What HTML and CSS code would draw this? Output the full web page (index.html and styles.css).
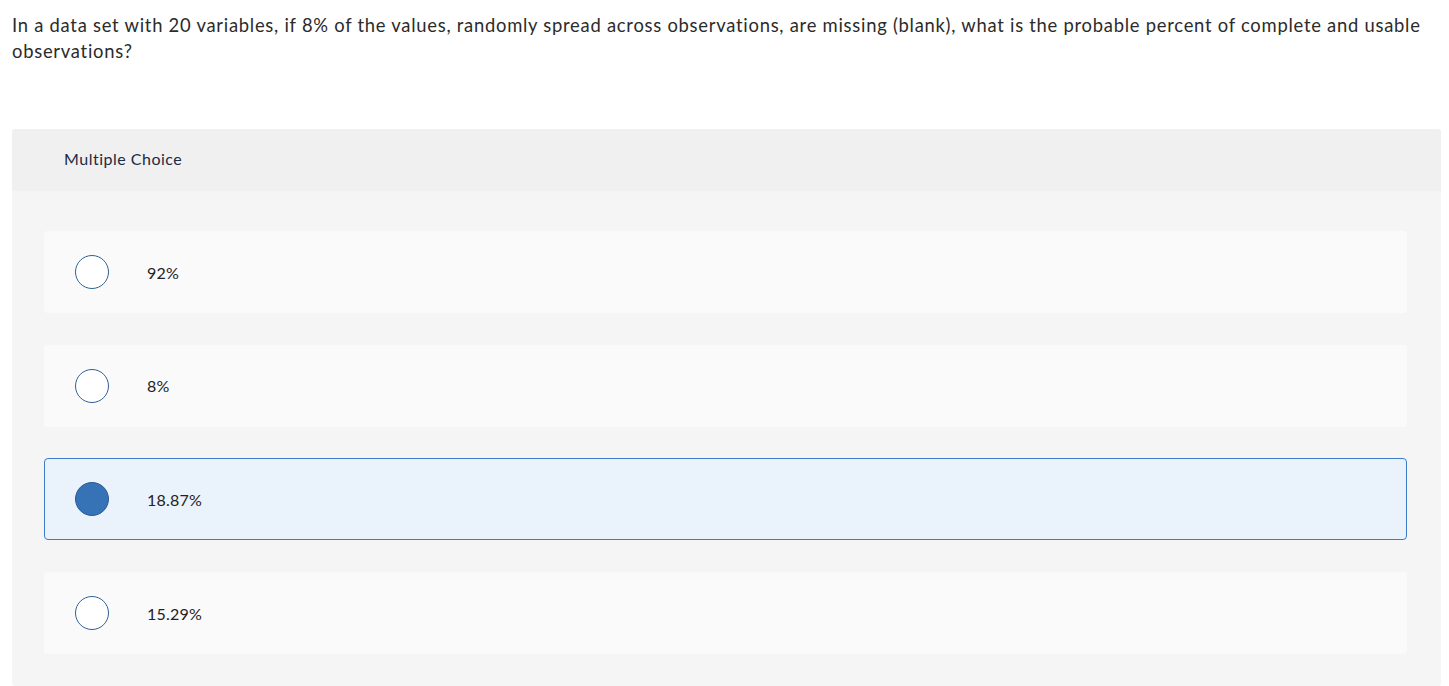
FILE: index.html
```html
<!DOCTYPE html>
<html>
<head>
<meta charset="utf-8">
<link rel="stylesheet" href="styles.css">
</head>
<body>
<div class="question">In a data set with 20 variables, if 8% of the values, randomly spread across observations, are missing (blank), what is the probable percent of complete and usable observations?</div>
<div class="panel">
  <div class="panel-head">Multiple Choice</div>
  <div class="panel-body">
    <div class="option"><span class="radio"></span><span class="label">92%</span></div>
    <div class="option"><span class="radio"></span><span class="label">8%</span></div>
    <div class="option selected"><span class="radio"></span><span class="label">18.87%</span></div>
    <div class="option"><span class="radio"></span><span class="label">15.29%</span></div>
  </div>
</div>
</body>
</html>
```
FILE: styles.css
```css
html, body {
  margin: 0;
  padding: 0;
  background: #ffffff;
}
body {
  font-family: "Lato", "Liberation Sans", sans-serif;
  color: #333333;
  padding: 12px 8px 0 12px;
  overflow: hidden;
}
.question {
  font-size: 18.4px;
  line-height: 26px;
  letter-spacing: 0.74px;
  color: #2b2b2b;
  padding-right: 4px;
}
.panel {
  margin-top: 65px;
  width: 1429px;
  border-radius: 3px;
  background: #f5f5f5;
  overflow: hidden;
}
.panel-head {
  background: #f0f0f0;
  height: 62px;
  box-sizing: border-box;
  padding-bottom: 3px;
  display: flex;
  align-items: center;
  padding-left: 52px;
  font-size: 16px;
  letter-spacing: 0.5px;
  color: #1c2a44;
}
.panel-body {
  padding: 40px 34px 32px 32px;
  display: flex;
  flex-direction: column;
  gap: 31.7px;
}
.option {
  height: 82px;
  box-sizing: border-box;
  background: #fafafa;
  border-radius: 4px;
  border: 1px solid transparent;
  display: flex;
  align-items: center;
  padding-left: 30px;
}
.option.selected {
  background: #eaf2fb;
  border-color: #3b7dc9;
}
.radio {
  width: 34px;
  height: 34px;
  box-sizing: border-box;
  border-radius: 50%;
  border: 1.5px solid #2f6196;
  background: #ffffff;
  flex: none;
}
.selected .radio {
  background: #3573b6;
  border-color: #2a5d94;
}
.label {
  margin-left: 38px;
  font-size: 16px;
  letter-spacing: 0.2px;
  color: #222222;
}
```
